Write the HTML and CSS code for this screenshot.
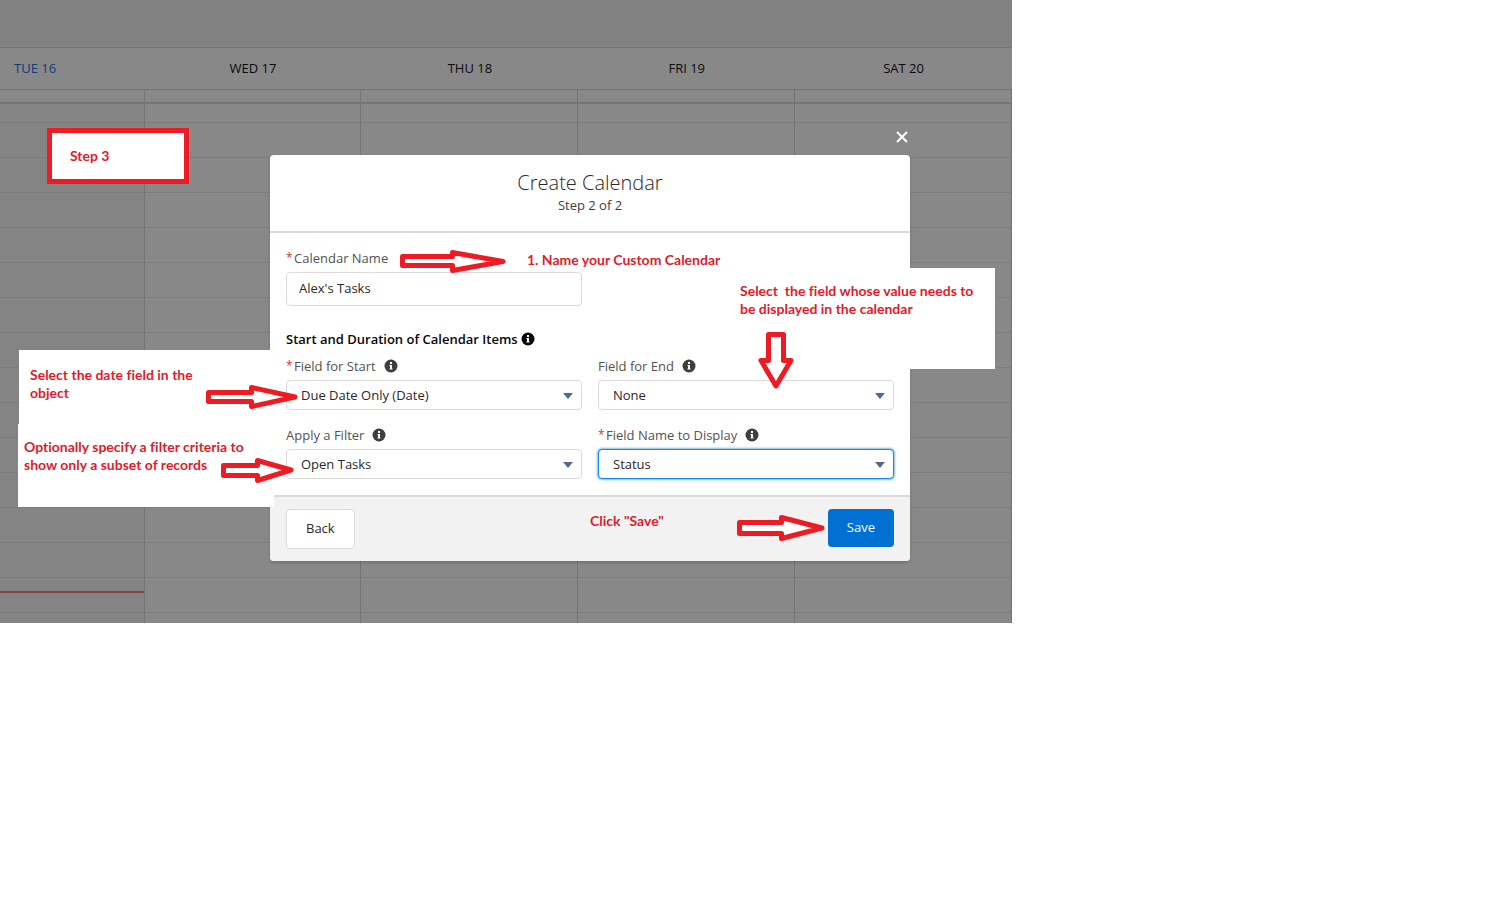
FILE: index.html
```html
<!DOCTYPE html>
<html lang="en">

<head>
  <meta charset="UTF-8">
  <meta name="viewport" content="width=device-width, initial-scale=1.0">
  <title>Create Calendar</title>
  <link rel="stylesheet" href="styles.css">
</head>

<body>
  <main class="scene">
    <section class="calendar">
      <div class="toolbar"></div>
      <div class="week days">
        <span class="today">TUE 16</span>
        <span>WED 17</span>
        <span>THU 18</span>
        <span>FRI 19</span>
        <span>SAT 20</span>
      </div>
      <div class="week all_day">
        <div></div>
        <div></div>
        <div></div>
        <div></div>
        <div></div>
      </div>
      <div class="week hours">
        <div class="today"><i class="now"></i></div>
        <div></div>
        <div></div>
        <div></div>
        <div></div>
      </div>
    </section>

    <form class="modal" onsubmit="return false">
      <button type="button" class="close" aria-label="Close">
        <svg width="12" height="12" viewBox="0 0 12 12"><path d="M1 1L11 11M11 1L1 11" /></svg>
      </button>
      <header>
        <h1>Create Calendar</h1>
        <p>Step 2 of 2</p>
      </header>

      <div class="modal_body">
        <div class="fields">
          <div class="field">
            <label for="name"><abbr>*</abbr>Calendar Name</label>
            <input type="text" id="name" value="Alex's Tasks">
          </div>
        </div>

        <h2>Start and Duration of Calendar Items
          <svg class="info" viewBox="0 0 14 14"><circle cx="7" cy="7" r="6.5" /><path d="M6 3h2v2H6zM5.5 6H8v3.5h.5v1h-3v-1H6V7h-.5z" /></svg>
        </h2>

        <div class="fields">
          <div class="field">
            <label for="start"><abbr>*</abbr>Field for Start
              <svg class="info" viewBox="0 0 14 14"><circle cx="7" cy="7" r="6.5" /><path d="M6 3h2v2H6zM5.5 6H8v3.5h.5v1h-3v-1H6V7h-.5z" /></svg>
            </label>
            <div class="select">
              <select id="start"><option>Due Date Only (Date)</option></select>
            </div>
          </div>
          <div class="field">
            <label for="end">Field for End
              <svg class="info" viewBox="0 0 14 14"><circle cx="7" cy="7" r="6.5" /><path d="M6 3h2v2H6zM5.5 6H8v3.5h.5v1h-3v-1H6V7h-.5z" /></svg>
            </label>
            <div class="select">
              <select id="end"><option>None</option></select>
            </div>
          </div>
          <div class="field">
            <label for="filter">Apply a Filter
              <svg class="info" viewBox="0 0 14 14"><circle cx="7" cy="7" r="6.5" /><path d="M6 3h2v2H6zM5.5 6H8v3.5h.5v1h-3v-1H6V7h-.5z" /></svg>
            </label>
            <div class="select">
              <select id="filter"><option>Open Tasks</option></select>
            </div>
          </div>
          <div class="field">
            <label for="display"><abbr>*</abbr>Field Name to Display
              <svg class="info" viewBox="0 0 14 14"><circle cx="7" cy="7" r="6.5" /><path d="M6 3h2v2H6zM5.5 6H8v3.5h.5v1h-3v-1H6V7h-.5z" /></svg>
            </label>
            <div class="select">
              <select id="display" class="active"><option>Status</option></select>
            </div>
          </div>
        </div>
      </div>

      <footer>
        <button type="button" class="btn">Back</button>
        <button type="submit" class="btn save">Save</button>
      </footer>
    </form>

    <!-- notes over the dialog -->
    <p class="note note_step">Step 3</p>
    <p class="note note_name">1. Name your Custom Calendar</p>
    <p class="note note_end">Select&nbsp; the field whose value needs to<br>be displayed in the calendar</p>
    <p class="note note_start">Select the date field in the<br>object</p>
    <p class="note note_filter">Optionally specify a filter criteria to<br>show only a subset of records</p>
    <p class="note note_save">Click "Save"</p>

    <svg class="arrow arrow_name" width="106" height="24" viewBox="0 0 106 24"><path d="M2.5 6.5H52.5V2.5L103 11.5L52.5 20.5V15.5H2.5Z" /></svg>
    <svg class="arrow arrow_end" width="36" height="58" viewBox="0 0 36 58"><path d="M10.5 2.5H25.5V28.5H33L18 54L3 28.5H10.5Z" /></svg>
    <svg class="arrow arrow_start" width="92" height="24" viewBox="0 0 92 24"><path d="M2.5 7.5H45.5V2.5L89 12L45.5 21.5V16.5H2.5Z" /></svg>
    <svg class="arrow arrow_filter" width="74" height="26" viewBox="0 0 74 26"><path d="M2.5 7.5H36.5V2.5L70 12L36.5 22.5V17.5H2.5Z" /></svg>
    <svg class="arrow arrow_save" width="88" height="26" viewBox="0 0 88 26"><path d="M2.5 7.5H44.5V2.5L85 13L44.5 23.5V18.5H2.5Z" /></svg>
  </main>
</body>

</html>
```
FILE: styles.css
```css
* {
  box-sizing: border-box;
  margin: 0;
}

body {
  background: #fff;
  font-family: "Open Sans", "Noto Sans", sans-serif;
  font-size: 13px;
  line-height: 20px;
  color: #16325c;
}

.scene {
  position: relative;
  width: 67.56%;
  min-width: 920px;
}

/* calendar behind the dialog */
.calendar {
  background: #888;
  color: #0b0b0b;
}

.toolbar {
  height: 48px;
  background: #818181;
  border-bottom: 1px solid #747474;
}

.week {
  display: grid;
  grid-template-columns: 2fr 3fr 3fr 3fr 3fr;
}

.days {
  padding: 10px 0 11px;
  text-align: center;
  border-bottom: 1px solid #747474;
}

.days .today {
  padding-left: 14px;
  text-align: left;
  color: #0b3f78;
}

.all_day {
  height: 14px;
  border-bottom: 2px solid #747474;
}

.all_day div,
.hours div {
  border-right: 1px solid #747474;
}

.hours {
  height: 519px;
}

.hours div {
  background: repeating-linear-gradient(#888 0 34px, #7d7d7d 34px 35px) 0 -16px;
  background-size: 100% 560px;
}

.hours .today {
  position: relative;
  background-image: repeating-linear-gradient(#848484 0 34px, #7a7a7a 34px 35px);
}

.now {
  position: absolute;
  top: 487px;
  left: 0;
  width: 100%;
  height: 2px;
  background: #84444a;
}

/* dialog */
.modal {
  position: absolute;
  top: 155px;
  left: 270px;
  width: 640px;
  border-radius: 4px;
  background: #fff;
  box-shadow: 0 2px 3px rgba(0, 0, 0, 0.16);
}

.modal header {
  padding: 15px 16px 16px;
  border-bottom: 2px solid #dddbda;
  text-align: center;
  color: #3e3e3c;
}

.modal h1 {
  font-size: 20px;
  font-weight: 300;
  line-height: 25px;
  color: #2b2826;
}

.close {
  position: absolute;
  top: -24px;
  right: 2px;
  display: flex;
  padding: 0;
  border: 0;
  background: none;
}

.close svg {
  stroke: #fff;
  stroke-width: 2;
}

.modal_body {
  padding: 15px 16px 16px;
}

.modal h2 {
  display: flex;
  align-items: center;
  gap: 3px;
  margin: 23px 0 7px;
  font-size: 13px;
  font-weight: 600;
  color: #080707;
}

.fields {
  display: grid;
  grid-template-columns: 1fr 1fr;
  gap: 15px 16px;
}

.field label {
  display: flex;
  align-items: center;
  margin-bottom: 4px;
  color: #54524f;
}

.field abbr {
  width: 8px;
  font-size: 12px;
  color: #c23934;
}

.info {
  width: 14px;
  height: 14px;
  fill: #3e3e3c;
}

.info path {
  fill: #fff;
}

label .info {
  margin-left: 8px;
}

h2 .info {
  fill: #080707;
}

.field input,
.field select {
  display: block;
  width: 100%;
  height: 30px;
  padding: 0 14px;
  border: 1px solid #dddbda;
  border-radius: 4px;
  background: #fff;
  font: inherit;
  color: #2b2826;
  appearance: none;
  outline: 0;
}

.field input {
  height: 34px;
  padding: 0 12px 2px;
}

.field select.active {
  border-color: #1589ee;
  box-shadow: 0 0 3px #0070d2;
}

.select {
  position: relative;
}

.select::after {
  content: "";
  position: absolute;
  top: 13px;
  right: 9px;
  border: 5px solid transparent;
  border-top: 6px solid #54698d;
  border-bottom: 0;
  pointer-events: none;
}

.modal footer {
  display: flex;
  justify-content: space-between;
  align-items: flex-start;
  padding: 12px 16px;
  border-top: 2px solid #dddbda;
  border-radius: 0 0 4px 4px;
  background: #f2f2f2;
}

.btn {
  height: 40px;
  padding: 0 19px 2px;
  border: 1px solid #dddbda;
  border-radius: 4px;
  background: #fff;
  font: inherit;
  color: #2b2826;
}

.save {
  height: 38px;
  border: 0;
  background: #0070d2;
  color: #fff;
}

/* notes */
.note {
  position: absolute;
  font-family: Lato, sans-serif;
  font-size: 14px;
  font-weight: 700;
  font-variant-ligatures: none;
  line-height: 18px;
  white-space: nowrap;
  color: #e01b2b;
}

.note_step {
  top: 128px;
  left: 47px;
  width: 142px;
  padding: 14px 18px;
  border: 5px solid #ed1c24;
  background: #fff;
}

.note_name {
  top: 251px;
  left: 527px;
}

.note_end {
  top: 268px;
  left: 735px;
  width: 260px;
  height: 101px;
  padding: 14px 5px;
  background: #fff;
}

.note_start {
  top: 350px;
  left: 19px;
  width: 252px;
  height: 74px;
  padding: 16px 11px;
  background: #fff;
}

.note_filter {
  top: 424px;
  left: 18px;
  width: 256px;
  height: 83px;
  padding: 14px 6px;
  background: #fff;
}

.note_save {
  top: 512px;
  left: 590px;
}

.arrow {
  position: absolute;
  fill: #fff;
  stroke: #ed1c24;
  stroke-width: 5;
  stroke-linejoin: round;
}

.arrow_name {
  top: 250px;
  left: 400px;
}

.arrow_end {
  top: 332px;
  left: 758px;
}

.arrow_start {
  top: 385px;
  left: 206px;
}

.arrow_filter {
  top: 458px;
  left: 221px;
}

.arrow_save {
  top: 515px;
  left: 737px;
}
```
